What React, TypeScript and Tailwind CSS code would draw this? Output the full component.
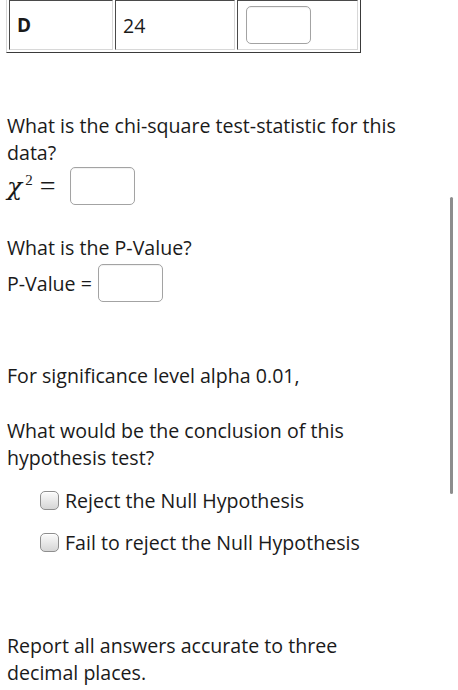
import React from "react";

const font = { fontFamily: '"Open Sans", "Liberation Sans", sans-serif' };

function Box({ className = "" }: { className?: string }) {
  return (
    <div
      className={
        "w-[65px] h-[38px] rounded-[5px] border border-[#a3a3a3] bg-white shadow-[inset_0_1px_1px_rgba(0,0,0,0.06)] " +
        className
      }
    />
  );
}

function Check({ label }: { label: string }) {
  return (
    <div className="flex items-center h-[27px]">
      <div className="w-[19px] h-[19px] rounded-[5px] border border-[#8e8e8e] bg-gradient-to-b from-[#fbfbfb] to-[#d6d6d6] shadow-[inset_0_1px_0_#fff]" />
      <span className="ml-[6px]">{label}</span>
    </div>
  );
}

export default function App() {
  return (
    <div
      className="relative w-[458px] h-[690px] overflow-hidden bg-white text-[19.6px] leading-[27px] text-[#1a1a1a]"
      style={font}
    >
      <table className="mt-[-3px] ml-[6px] border-separate border-spacing-[2px] border border-t-[#d8d8d8] border-l-[#d8d8d8] border-r-[#3a3a3a] border-b-[#3a3a3a]">
        <tbody>
          <tr>
            <td className="w-[104px] h-[50px] border border-t-[#4a4a4a] border-l-[#4a4a4a] border-r-[#d8d8d8] border-b-[#d8d8d8] pl-[7px] align-middle text-[19px] font-bold">
              D
            </td>
            <td className="w-[120px] h-[50px] border border-t-[#4a4a4a] border-l-[#4a4a4a] border-r-[#d8d8d8] border-b-[#d8d8d8] pl-[7px] align-middle text-[19.5px]">
              24
            </td>
            <td className="w-[121px] h-[50px] border border-t-[#4a4a4a] border-l-[#4a4a4a] border-r-[#d8d8d8] border-b-[#d8d8d8] pl-[8px] align-middle">
              <Box />
            </td>
          </tr>
        </tbody>
      </table>

      <div className="pl-[7px] w-[402px]">
        <p className="mt-[59px]">
          What is the chi-square test-statistic for this data?
        </p>
        <div className="flex items-center h-[38px] mt-[1px]">
          <span
            className="text-[25px] italic leading-none"
            style={{ fontFamily: '"DejaVu Serif", "Liberation Serif", serif' }}
          >
            χ
          </span>
          <span
            className="text-[15px] leading-none self-start mt-[6px] ml-[3px]"
            style={{ fontFamily: '"Liberation Serif", serif' }}
          >
            2
          </span>
          <span
            className="text-[28px] leading-none ml-[7px]"
            style={{ fontFamily: '"Liberation Serif", serif' }}
          >
            =
          </span>
          <Box className="ml-[15px]" />
        </div>

        <p className="mt-[29px]">What is the P-Value?</p>
        <div className="flex items-center h-[38px] mt-[3px]">
          <span>P-Value =</span>
          <Box className="ml-[6px]" />
        </div>

        <p className="mt-[60px]">For significance level alpha 0.01,</p>

        <p className="mt-[28px]">What would be the conclusion of this hypothesis test?</p>

        <div className="ml-[33px] mt-[16px] flex flex-col gap-[15px]">
          <Check label="Reject the Null Hypothesis" />
          <Check label="Fail to reject the Null Hypothesis" />
        </div>

        <p className="mt-[76px]">Report all answers accurate to three decimal places.</p>
      </div>

      <div className="absolute left-[450px] top-[197px] w-[3px] h-[297px] rounded-full bg-[#8d8d8d]" />
    </div>
  );
}
